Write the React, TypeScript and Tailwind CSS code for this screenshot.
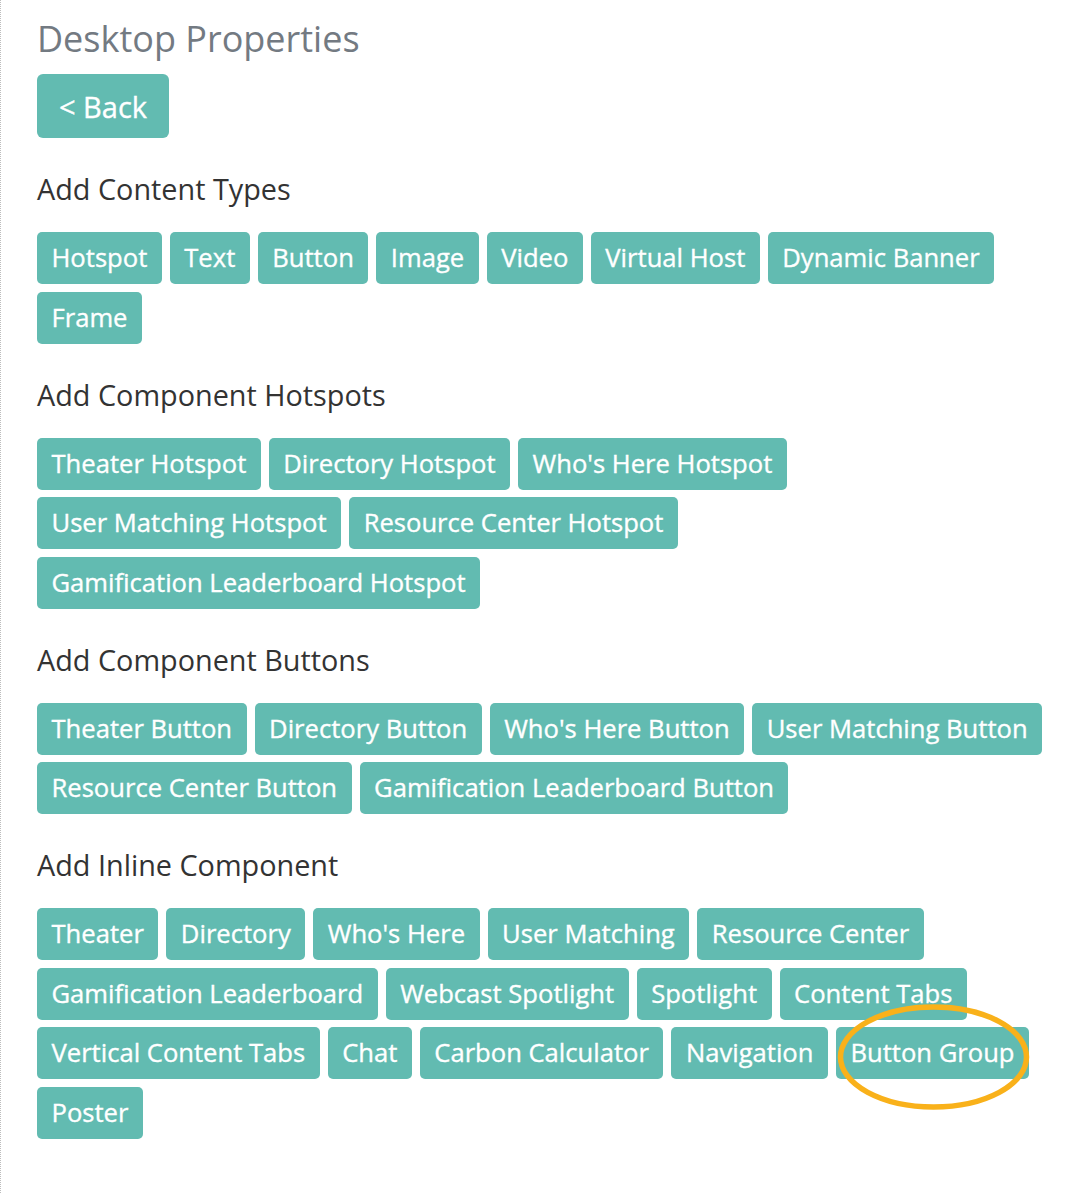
import type { ReactNode } from "react";

const SECTIONS: { title: string; items: string[] }[] = [
  {
    title: "Add Content Types",
    items: ["Hotspot", "Text", "Button", "Image", "Video", "Virtual Host", "Dynamic Banner", "Frame"],
  },
  {
    title: "Add Component Hotspots",
    items: [
      "Theater Hotspot",
      "Directory Hotspot",
      "Who's Here Hotspot",
      "User Matching Hotspot",
      "Resource Center Hotspot",
      "Gamification Leaderboard Hotspot",
    ],
  },
  {
    title: "Add Component Buttons",
    items: [
      "Theater Button",
      "Directory Button",
      "Who's Here Button",
      "User Matching Button",
      "Resource Center Button",
      "Gamification Leaderboard Button",
    ],
  },
  {
    title: "Add Inline Component",
    items: [
      "Theater",
      "Directory",
      "Who's Here",
      "User Matching",
      "Resource Center",
      "Gamification Leaderboard",
      "Webcast Spotlight",
      "Spotlight",
      "Content Tabs",
      "Vertical Content Tabs",
      "Chat",
      "Carbon Calculator",
      "Navigation",
      "Button Group",
      "Poster",
    ],
  },
];

// Hand-drawn highlight around one button
function Highlight() {
  return (
    <svg
      className="absolute left-[1px] top-[-23px] w-[193px] h-[106px] pointer-events-none overflow-visible"
      viewBox="0 0 193 106"
    >
      <ellipse cx="96.5" cy="53" rx="93" ry="50" fill="none" stroke="#f9b11a" strokeWidth="5.5" />
    </svg>
  );
}

function Chip({ children, marked }: { children: ReactNode; marked?: boolean }) {
  return (
    <button className="relative h-[52px] px-[14.5px] rounded-[5px] bg-[#62bbb1] text-white text-[25.6px] leading-none whitespace-nowrap [-webkit-text-stroke:0.35px_white]">
      {children}
      {marked && <Highlight />}
    </button>
  );
}

export default function App() {
  return (
    <div
      className="min-h-screen bg-white border-l border-dotted border-[#bdbdbd] pl-[36px] pr-[20px] pt-[14px] pb-[40px]"
      style={{ fontFamily: '"Open Sans", "Noto Sans", sans-serif' }}
    >
      <h1 className="text-[36px] leading-[49px] text-[#737a82] font-normal">Desktop Properties</h1>
      <button className="mt-[11px] h-[64px] px-[22px] rounded-[6px] bg-[#62bbb1] text-white text-[29px] leading-none [-webkit-text-stroke:0.35px_white]">
        &lt; Back
      </button>

      {SECTIONS.map(s => (
        <section key={s.title}>
          <h2 className="mt-[31px] mb-[24px] text-[28.8px] leading-[39px] text-[#333333] font-normal">{s.title}</h2>
          <div className="flex flex-wrap gap-x-[8px] gap-y-[7.5px]">
            {s.items.map(item => (
              <Chip key={item} marked={item === "Button Group"}>
                {item}
              </Chip>
            ))}
          </div>
        </section>
      ))}
    </div>
  );
}
